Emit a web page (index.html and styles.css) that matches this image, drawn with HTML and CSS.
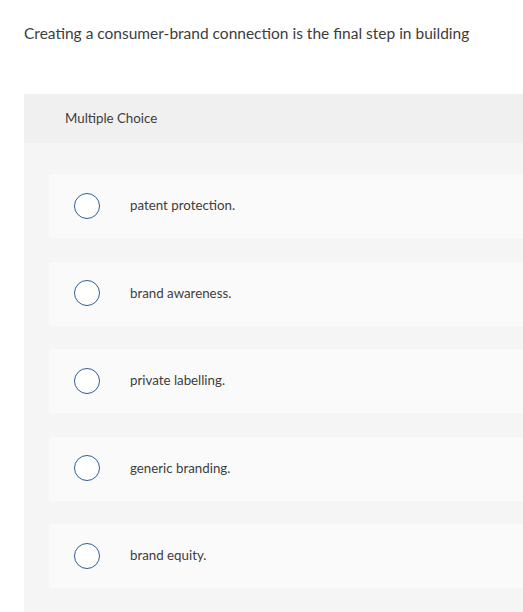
FILE: index.html
```html
<!DOCTYPE html>
<html lang="en">
<head>
<meta charset="utf-8">
<title>Multiple Choice</title>
<link rel="stylesheet" href="styles.css">
</head>
<body>
<p class="question">Creating a consumer-brand connection is the final step in building</p>
<section class="panel">
  <div class="panel-head">Multiple Choice</div>
  <div class="panel-body">
    <label class="option"><span class="radio"></span><span class="opt-text">patent protection.</span></label>
    <label class="option"><span class="radio"></span><span class="opt-text">brand awareness.</span></label>
    <label class="option"><span class="radio"></span><span class="opt-text">private labelling.</span></label>
    <label class="option"><span class="radio"></span><span class="opt-text">generic branding.</span></label>
    <label class="option"><span class="radio"></span><span class="opt-text">brand equity.</span></label>
  </div>
</section>
</body>
</html>
```
FILE: styles.css
```css
html, body {
  margin: 0;
  padding: 0;
  background: #ffffff;
  overflow: hidden;
}
body {
  font-family: Lato, "Open Sans", "Liberation Sans", sans-serif;
  font-weight: 400;
  color: #333333;
}
.question {
  margin: 0;
  padding: 23px 24px 0 24px;
  font-size: 15.5px;
  line-height: 20px;
  color: #3d3d3d;
}
.panel {
  margin: 51px 0 0 24px;
  background: #f5f5f5;
  min-height: 520px;
}
.panel-head {
  height: 49px;
  background: #f0f0f0;
  display: flex;
  align-items: center;
  padding-left: 41px;
  padding-bottom: 1px;
  box-sizing: border-box;
  font-size: 13.3px;
  color: #3d3d3d;
}
.panel-body {
  padding: 31px 0 0 25px;
  display: flex;
  flex-direction: column;
  gap: 23.5px;
}
.option {
  height: 64px;
  background: #fafafa;
  border-radius: 3px 0 0 3px;
  display: flex;
  align-items: center;
  padding-left: 25px;
}
.radio {
  width: 24px;
  height: 24px;
  margin-bottom: 1px;
  border: 1.5px solid #2d5f93;
  border-radius: 50%;
  background: #ffffff;
  flex: none;
}
.opt-text {
  margin-left: 30px;
  padding-bottom: 2px;
  font-size: 13.3px;
  color: #3d3d3d;
}
```
